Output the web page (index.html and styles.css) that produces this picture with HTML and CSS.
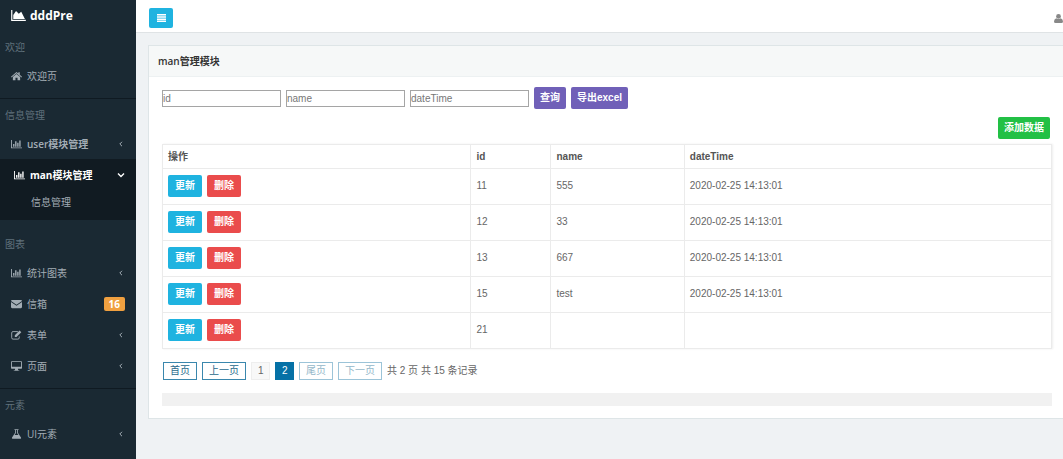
FILE: index.html
```
<!DOCTYPE html>
<html lang="zh-CN">
<head>
    <meta charset="UTF-8">
    <meta name="viewport" content="width=device-width, initial-scale=1.0">
    <title>dddPre</title>
    <link rel="stylesheet" href="styles.css">
</head>
<body>
    <!-- Icon set -->
    <svg class="sprite" aria-hidden="true">
        <symbol id="area" viewBox="0 0 16 12"><path d="M0 0h1.300v10.700H16V12H0zM2.300 9.700V5.500L5.300 1l3 3.200L11 2l4 7.700z"/></symbol>
        <symbol id="bars" viewBox="0 0 16 14"><path d="M0 1h1.300v11H16v1.300H0zM3 7h2v4H3zM6 3h2v8H6zM9 5h2v6H9zM12 2h2v9h-2z"/></symbol>
        <symbol id="home" viewBox="0 0 16 14"><path d="M8 1l2.700 2.400V1.700h2v3.500L16 8l-.8 1L8 2.900.8 9 0 8zM8 4l5.300 4.500V13H9.500V9.500h-3V13H2.700V8.500z"/></symbol>
        <symbol id="mail" viewBox="0 0 16 14"><path d="M1.500 1h13Q16 1 16 2.500L8 8 0 2.500Q0 1 1.500 1zM0 4l8 5.500L16 4v7.500q0 1.500-1.500 1.500h-13Q0 13 0 11.500z"/></symbol>
        <symbol id="edit" viewBox="0 0 16 14"><path d="M10 2H3Q1 2 1 4v7q0 2 2 2h7q2 0 2-2V9" fill="none" stroke="currentColor" stroke-width="1.300"/><path d="M5.500 10V7.500l7-7L15 3l-7 7z"/></symbol>
        <symbol id="desktop" viewBox="0 0 16 14"><path d="M1 0h14q1 0 1 1v9q0 1-1 1h-5l.5 2H12v1H4v-1h1.500L6 11H1q-1 0-1-1V1q0-1 1-1zM1.300 1.300v6.700h13.400V1.300z" fill-rule="evenodd"/></symbol>
        <symbol id="flask" viewBox="0 0 16 14"><path d="M5 0h6v1.200h-1V5l4.500 7q.8 2-1 2h-11q-1.800 0-1-2L6 5V1.200H5zM7.200 1.200v4.200L5.200 8.500h5.600l-2-3.100V1.200z" fill-rule="evenodd"/></symbol>
        <symbol id="menu" viewBox="0 0 9 8"><path d="M0 0h9v1.500H0zM0 2.200h9v1.500H0zM0 4.400h9v1.500H0zM0 6.500h9V8H0z"/></symbol>
        <symbol id="user" viewBox="0 0 12 12"><circle cx="6" cy="3.200" r="3.200"/><path d="M3 5.500q3 2.500 6 0 3 .8 3 4.500 0 2-2 2H2q-2 0-2-2 0-3.700 3-4.500z"/></symbol>
        <symbol id="left" viewBox="0 0 8 8"><path d="M5 1.800L2.800 4 5 6.200" fill="none" stroke="currentColor" stroke-width="1"/></symbol>
        <symbol id="down" viewBox="0 0 8 8"><path d="M1 2.500l3 3 3-3" fill="none" stroke="currentColor" stroke-width="1.400"/></symbol>
    </svg>

    <div class="layout">
        <aside class="sidebar">
            <a href="#" class="brand"><svg><use href="#area"/></svg>dddPre</a>

            <nav>
                <section class="group">
                    <h2>欢迎</h2>
                    <a href="#"><svg class="icon"><use href="#home"/></svg>欢迎页</a>
                </section>

                <section class="group line">
                    <h2>信息管理</h2>
                    <a href="#" class="strong"><svg class="icon"><use href="#bars"/></svg>user模块管理<svg class="arrow"><use href="#left"/></svg></a>
                    <div class="open">
                        <a href="#" class="strong active"><svg class="icon"><use href="#bars"/></svg>man模块管理<svg class="arrow"><use href="#down"/></svg></a>
                        <a href="#" class="sub">信息管理</a>
                    </div>
                </section>

                <section class="group">
                    <h2>图表</h2>
                    <a href="#"><svg class="icon"><use href="#bars"/></svg>统计图表<svg class="arrow"><use href="#left"/></svg></a>
                    <a href="#"><svg class="icon"><use href="#mail"/></svg>信箱<span class="badge">16</span></a>
                    <a href="#"><svg class="icon"><use href="#edit"/></svg>表单<svg class="arrow"><use href="#left"/></svg></a>
                    <a href="#"><svg class="icon"><use href="#desktop"/></svg>页面<svg class="arrow"><use href="#left"/></svg></a>
                </section>

                <section class="group line">
                    <h2>元素</h2>
                    <a href="#"><svg class="icon"><use href="#flask"/></svg>UI元素<svg class="arrow"><use href="#left"/></svg></a>
                </section>
            </nav>
        </aside>

        <main class="main">
            <header class="topbar">
                <button type="button" class="toggle" aria-label="菜单"><svg><use href="#menu"/></svg></button>
                <a href="#" class="user" aria-label="用户"><svg><use href="#user"/></svg></a>
            </header>

            <div class="panel">
                <h1 class="panel-heading">man管理模块</h1>
                <div class="panel-body">
                    <form class="search">
                        <input type="text" placeholder="id" aria-label="id">
                        <input type="text" placeholder="name" aria-label="name">
                        <input type="text" placeholder="dateTime" aria-label="dateTime">
                        <button type="button" class="btn purple">查询</button>
                        <button type="button" class="btn purple">导出excel</button>
                    </form>
                    <div class="tools">
                        <button type="button" class="btn green">添加数据</button>
                    </div>

                    <table>
                        <thead>
                            <tr>
                                <th class="col-action">操作</th>
                                <th class="col-id">id</th>
                                <th class="col-name">name</th>
                                <th>dateTime</th>
                            </tr>
                        </thead>
                        <tbody>
                            <tr>
                                <td><div class="actions"><button type="button" class="btn blue">更新</button><button type="button" class="btn red">删除</button></div></td>
                                <td>11</td>
                                <td>555</td>
                                <td>2020-02-25 14:13:01</td>
                            </tr>
                            <tr>
                                <td><div class="actions"><button type="button" class="btn blue">更新</button><button type="button" class="btn red">删除</button></div></td>
                                <td>12</td>
                                <td>33</td>
                                <td>2020-02-25 14:13:01</td>
                            </tr>
                            <tr>
                                <td><div class="actions"><button type="button" class="btn blue">更新</button><button type="button" class="btn red">删除</button></div></td>
                                <td>13</td>
                                <td>667</td>
                                <td>2020-02-25 14:13:01</td>
                            </tr>
                            <tr>
                                <td><div class="actions"><button type="button" class="btn blue">更新</button><button type="button" class="btn red">删除</button></div></td>
                                <td>15</td>
                                <td>test</td>
                                <td>2020-02-25 14:13:01</td>
                            </tr>
                            <tr>
                                <td><div class="actions"><button type="button" class="btn blue">更新</button><button type="button" class="btn red">删除</button></div></td>
                                <td>21</td>
                                <td></td>
                                <td></td>
                            </tr>
                        </tbody>
                    </table>

                    <div class="pager">
                        <button type="button">首页</button>
                        <button type="button">上一页</button>
                        <button type="button" class="num">1</button>
                        <button type="button" class="num current">2</button>
                        <button type="button" disabled>尾页</button>
                        <button type="button" disabled>下一页</button>
                        <span>共 2 页 共 15 条记录</span>
                    </div>
                    <div class="strip"></div>
                </div>
            </div>
        </main>
    </div>
</body>
</html>
```

FILE: styles.css
```
* {
    box-sizing: border-box;
}

body {
    margin: 0;
    font-family: "Liberation Sans", "Noto Sans CJK SC", sans-serif;
    font-size: 10px;
    line-height: 14px;
    color: #666;
    background-color: #eff2f4;
}

a {
    color: inherit;
    text-decoration: none;
}

button,
input {
    font: inherit;
}

button {
    cursor: pointer;
}

svg {
    fill: currentColor;
    flex: none;
}

.sprite {
    position: absolute;
    width: 0;
    height: 0;
}

.layout {
    display: flex;
    min-height: 100vh;
}

/* sidebar */
.sidebar {
    flex: 0 0 136px;
    background-color: #1a2933;
    color: #a3adb5;
    font-family: "Open Sans", "Noto Sans CJK SC", sans-serif;
}

.brand {
    display: flex;
    align-items: center;
    gap: 4px;
    height: 31px;
    padding-left: 11px;
    color: #fff;
    font-size: 12px;
    font-weight: bold;
}

.brand svg {
    width: 15px;
    height: 11px;
}

.group {
    padding: 4px 0 7px;
    border-bottom: 1px solid transparent;
}

.group.line {
    border-top: 1px solid #0f1a22;
    margin-top: -1px;
}

.group h2 {
    margin: 0;
    padding-left: 5px;
    font-size: 10px;
    font-weight: normal;
    line-height: 25px;
    color: #60717c;
}

.group a {
    display: flex;
    align-items: center;
    height: 31px;
    padding: 0 11px;
}

.group .strong {
    font-weight: 600;
}

.icon {
    width: 11px;
    height: 10px;
    margin-right: 5px;
}

.arrow {
    width: 8px;
    height: 8px;
    margin-left: auto;
}

.open {
    padding-bottom: 6px;
    background-color: #111b22;
}

.group .active {
    padding-left: 14px;
    color: #fff;
    font-weight: bold;
}

.group .sub {
    height: 24px;
    padding-left: 31px;
}

.badge {
    margin-left: auto;
    padding: 0 5px;
    border-radius: 2px;
    background-color: #f0a040;
    color: #fff;
    font-weight: bold;
}

/* content */
.main {
    flex: 1;
    min-width: 0;
}

.topbar {
    display: flex;
    align-items: center;
    justify-content: space-between;
    height: 33px;
    padding: 4px 0 0 13px;
    border-bottom: 1px solid #dfe3e5;
    background-color: #fff;
}

.toggle {
    display: flex;
    align-items: center;
    justify-content: center;
    width: 24px;
    height: 20px;
    padding: 0;
    border: none;
    border-radius: 2px;
    background-color: #1fb3e0;
    color: #fff;
}

.toggle svg {
    width: 9px;
    height: 8px;
}

.user {
    display: flex;
    color: #888;
}

.user svg {
    width: 9px;
    height: 9px;
}

.panel {
    margin: 12px 0 0 12px;
    border: 1px solid #dee5e7;
    border-right: none;
    background-color: #fff;
}

.panel-heading {
    margin: 0;
    padding: 0 9px;
    border-bottom: 1px solid #edf1f2;
    background-color: #f6f8f8;
    color: #333;
    font-family: "Open Sans", "Noto Sans CJK SC", sans-serif;
    font-size: 10px;
    font-weight: 600;
    line-height: 30px;
}

.panel-body {
    padding: 10px 11px 12px 13px;
}

.search {
    display: flex;
    align-items: center;
    gap: 5px;
}

.search input {
    width: 119px;
    height: 17px;
    padding: 0;
    border: 1px solid #a5a5a5;
    background-color: #fff;
}

.search input::placeholder {
    color: #777;
}

.btn {
    height: 22px;
    padding: 0 7px;
    border: none;
    border-radius: 2px;
    color: #fff;
    font-weight: bold;
}

.purple {
    padding: 0 6px;
    background-color: #7060b8;
}

.green {
    padding: 0 6px;
    background-color: #22c045;
}

.blue {
    background-color: #1fb3e0;
}

.red {
    background-color: #ea4c4c;
}

.tools {
    display: flex;
    justify-content: flex-end;
    padding: 8px 2px 5px 0;
}

table {
    width: 100%;
    table-layout: fixed;
    border-collapse: collapse;
    box-shadow: 1px 0 2px #eee;
}

th,
td {
    border: 1px solid #ebebeb;
    padding: 6px 5px 7px;
    text-align: left;
}

th {
    padding: 5px 5px 4px;
    color: #555;
}

.col-action {
    width: 34.7%;
}

.col-id {
    width: 9%;
}

.col-name {
    width: 15%;
}

.actions {
    display: flex;
    gap: 5px;
}

.pager {
    display: flex;
    align-items: center;
    gap: 5px;
    padding: 13px 1px;
}

.pager button {
    height: 18px;
    padding: 0 6px;
    border: 1px solid #3a87ad;
    background-color: #fff;
    color: #28698c;
    line-height: 16px;
}

.pager .num {
    width: 19px;
    border-color: #eee;
    background-color: #f8f8f8;
    color: #666;
}

.pager .current {
    border-color: #0571a6;
    background-color: #0571a6;
    color: #fff;
}

.pager button:disabled {
    border-color: #9cc4d8;
    color: #94b7c9;
}

.strip {
    height: 13px;
    background-color: #f1f1f1;
}
```
